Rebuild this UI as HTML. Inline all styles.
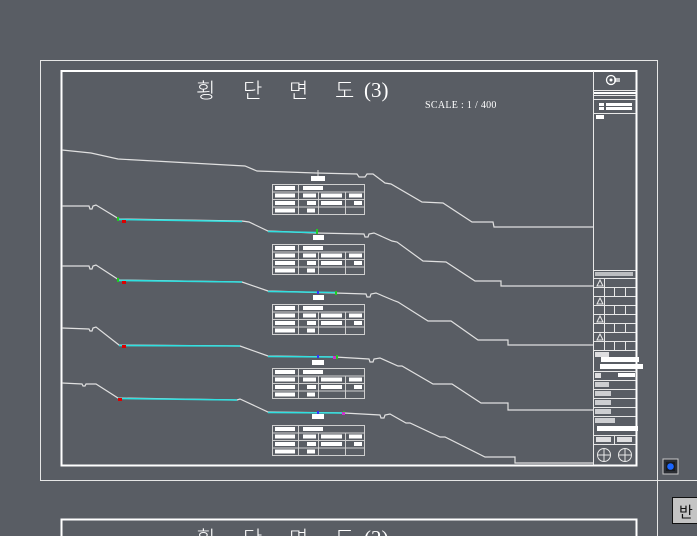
<!DOCTYPE html>
<html><head><meta charset="utf-8"><style>
html,body{margin:0;padding:0;width:697px;height:536px;overflow:hidden;background:#595d64}
svg{display:block}
</style></head><body>
<svg width="697" height="536" viewBox="0 0 697 536" xmlns="http://www.w3.org/2000/svg">
<defs>
<g id="tbl">
  <g fill="none" stroke="#cfcfcf" stroke-width="1">
    <rect x="272.5" y="0.5" width="92" height="30"/>
    <line x1="272" y1="8" x2="365" y2="8"/>
    <line x1="272" y1="15.5" x2="365" y2="15.5"/>
    <line x1="272" y1="23" x2="365" y2="23"/>
    <line x1="298.5" y1="0" x2="298.5" y2="31"/>
    <line x1="318.5" y1="8" x2="318.5" y2="31"/>
    <line x1="345.5" y1="8" x2="345.5" y2="31"/>
  </g>
  <g fill="#fff">
    <rect x="275" y="2" width="20" height="4"/>
    <rect x="303" y="2" width="20" height="4"/>
    <rect x="275" y="9.5" width="20" height="4"/><rect x="303" y="9.5" width="13" height="4"/><rect x="321" y="9.5" width="21" height="4"/><rect x="349" y="9.5" width="13" height="4"/>
    <rect x="275" y="17" width="20" height="4"/><rect x="307" y="17" width="9" height="4"/><rect x="321" y="17" width="21" height="4"/><rect x="354" y="17" width="8" height="4"/>
    <rect x="275" y="24.5" width="20" height="4"/><rect x="307" y="24.5" width="8" height="4"/>
  </g>
</g>
</defs>

<g stroke="#e6e6e6" stroke-width="1" fill="none">
  <line x1="40.5" y1="60.5" x2="657.5" y2="60.5"/>
  <line x1="40.5" y1="60" x2="40.5" y2="480.5"/>
  <line x1="40" y1="480.5" x2="697" y2="480.5"/>
  <line x1="657.5" y1="60" x2="657.5" y2="536"/>
</g>
<rect x="61.5" y="71" width="575" height="394.5" fill="none" stroke="#fff" stroke-width="2"/>
<rect x="61.5" y="519.5" width="575" height="30" fill="none" stroke="#fff" stroke-width="2"/>

<g fill="#fff" font-family="'Noto Sans CJK KR','Liberation Sans',sans-serif" font-size="21" font-weight="300">
  <text x="196" y="98">횡</text><text x="243" y="98">단</text><text x="289" y="98">면</text><text x="335" y="98">도</text>
  <text x="196" y="546">횡</text><text x="243" y="546">단</text><text x="289" y="546">면</text><text x="335" y="546">도</text>
</g>
<g fill="#fff" font-family="'Liberation Serif',serif" font-size="21">
  <text x="364" y="97">(3)</text><text x="364" y="545">(2)</text>
</g>
<text x="425" y="108" fill="#fff" font-family="'Liberation Serif',serif" font-size="10" letter-spacing="0.3">SCALE : 1 / 400</text>

<g fill="none" stroke="#e0e0e0" stroke-width="1.2">
  <polyline points="62,150 91,153 118,159 245,166 257,171 316,173 357,174 359,177 365,177 367,174 373,174 385,183 391,184 422,202 443,203 472,222 493,222 494,227 593,227"/>
  <polyline points="62,206 89,206 90,209 92,209 93,206 96,205 119,219 242,221 249,222 268,231 316,233 364,234 365,237 368,237 369,234 374,233 392,241 397,242 423,261 446,262 475,281 501,281 501,286 593,286"/>
  <polyline points="62,266 89,266 90,269 92,269 93,266 96,265 119,280 242,282 268,291 335,293 366,294 367,297 370,297 371,294 376,293 395,301 398,302 428,321 451,321 478,340 508,340 508,345 593,345"/>
  <polyline points="62,328 89,329 90,331 92,331 93,328 96,327 119,345 240,346 268,356 335,357 369,359 370,362 373,362 374,359 380,358 398,366 402,366 433,384 452,384 481,403 508,403 508,410 593,410"/>
  <polyline points="62,383 82,384 83,386 85,386 86,384 96,384 118,398 237,400 240,399 268,412 344,413 380,415 381,418 384,418 385,415 390,414 406,423 410,423 440,437 445,437 485,457 515,457 515,463 593,463"/>
</g>
<g fill="none" stroke="#2fe0e0" stroke-width="1.6">
  <line x1="119" y1="219.5" x2="242" y2="221.5"/><line x1="268" y1="231.5" x2="316" y2="232.5"/>
  <line x1="119" y1="280.5" x2="242" y2="282"/><line x1="268" y1="291.5" x2="335" y2="292.5"/>
  <line x1="119" y1="345.5" x2="240" y2="346"/><line x1="268" y1="356.5" x2="335" y2="357"/>
  <line x1="118" y1="398.5" x2="237" y2="400"/><line x1="268" y1="412.5" x2="344" y2="413"/>
</g>
<g>
  <rect x="122" y="220" width="4" height="3" fill="#d00"/><rect x="122" y="281" width="4" height="3" fill="#d00"/>
  <rect x="122" y="345" width="4" height="3" fill="#d00"/><rect x="118" y="398" width="4" height="3" fill="#d00"/>
  <rect x="117" y="217" width="2" height="4" fill="#2c2"/><rect x="117" y="278" width="2" height="4" fill="#2c2"/>
  <rect x="316" y="229" width="2" height="5" fill="#2c2"/><rect x="335" y="291" width="2" height="4" fill="#2c2"/>
  <rect x="336" y="355" width="2" height="4" fill="#2c2"/><rect x="343" y="411" width="2" height="4" fill="#2c2"/>
  <rect x="333" y="356" width="3" height="3" fill="#c3c"/><rect x="342" y="412" width="3" height="3" fill="#c3c"/>
  <rect x="317" y="291" width="2" height="3" fill="#33f"/><rect x="317" y="355" width="2" height="3" fill="#33f"/><rect x="317" y="411" width="2" height="3" fill="#33f"/>
  <line x1="318" y1="170" x2="318" y2="176" stroke="#ddd"/>
</g>
<g fill="#fff">
  <rect x="311" y="176" width="14" height="5"/><rect x="313" y="235" width="11" height="5"/>
  <rect x="313" y="295" width="11" height="5"/><rect x="312" y="360" width="12" height="5"/><rect x="312" y="414" width="12" height="5"/>
</g>
<use href="#tbl" y="184"/><use href="#tbl" y="244"/><use href="#tbl" y="304"/><use href="#tbl" y="368"/><use href="#tbl" y="425"/>

<g fill="none" stroke="#e8e8e8" stroke-width="1">
  <line x1="593.5" y1="71" x2="593.5" y2="465"/>
  <line x1="594" y1="90.5" x2="636" y2="90.5"/>
  <line x1="594" y1="95.5" x2="636" y2="95.5"/>
  <line x1="594" y1="99.5" x2="636" y2="99.5"/>
  <line x1="594" y1="113.5" x2="636" y2="113.5"/>
  <line x1="594" y1="270.5" x2="636" y2="270.5"/>
  <line x1="594" y1="278.5" x2="636" y2="278.5"/>
  <line x1="604.5" y1="278" x2="604.5" y2="350"/>
  <line x1="594" y1="287.5" x2="636" y2="287.5"/><line x1="594" y1="296.5" x2="636" y2="296.5"/>
  <line x1="594" y1="305.5" x2="636" y2="305.5"/><line x1="594" y1="314.5" x2="636" y2="314.5"/>
  <line x1="594" y1="323.5" x2="636" y2="323.5"/><line x1="594" y1="332.5" x2="636" y2="332.5"/>
  <line x1="594" y1="341.5" x2="636" y2="341.5"/><line x1="594" y1="350.5" x2="636" y2="350.5"/>
  <path d="M614.5 287v9M625.5 287v9M614.5 305v9M625.5 305v9M614.5 323v9M625.5 323v9M614.5 341v9M625.5 341v9"/>
  <path d="M594 371.5h42M594 380.5h42M594 389.5h42M594 398.5h42M594 407.5h42M594 416.5h42M594 435.5h42M594 444.5h42M614.5 435v9"/>
  <path d="M597 286l3-6 3 6zM597 304l3-6 3 6zM597 322l3-6 3 6zM597 340l3-6 3 6z"/>
  <circle cx="604" cy="455" r="6.5"/><circle cx="625" cy="455" r="6.5"/>
  <path d="M597.5 455h13M604 448.5v13M618.5 455h13M625 448.5v13"/>
</g>
<g fill="#fff">
  <rect x="594" y="92" width="42" height="2"/>
  <rect x="599" y="103" width="5" height="3"/><rect x="606" y="103" width="26" height="3"/>
  <rect x="599" y="107" width="5" height="3"/><rect x="606" y="107" width="26" height="3"/>
  <rect x="596" y="115" width="8" height="4"/>
  <rect x="595" y="272" width="38" height="4" opacity="0.6"/>
  <rect x="595" y="352" width="14" height="5" opacity="0.8"/>
  <rect x="601" y="357" width="38" height="5"/><rect x="600" y="364" width="43" height="5"/>
  <rect x="618" y="373" width="17" height="4"/>
  <rect x="595" y="373" width="6" height="5" opacity="0.8"/><rect x="595" y="382" width="14" height="5" opacity="0.7"/>
  <rect x="595" y="391" width="16" height="5" opacity="0.7"/><rect x="595" y="400" width="16" height="5" opacity="0.7"/>
  <rect x="595" y="409" width="16" height="5" opacity="0.7"/><rect x="595" y="418" width="20" height="5" opacity="0.7"/>
  <rect x="597" y="426" width="41" height="5"/>
  <rect x="596" y="437" width="15" height="5" opacity="0.8"/><rect x="617" y="437" width="15" height="5" opacity="0.8"/>
</g>
<g fill="none" stroke="#fff" stroke-width="1.3">
  <circle cx="611" cy="80" r="4.5"/><path d="M614 79h6M614 81h6"/>
</g>
<circle cx="611" cy="80" r="1.5" fill="#fff"/>

<rect x="663" y="459" width="15" height="15" fill="#2a2d33" stroke="#c8c8c8" stroke-width="1"/>
<rect x="666" y="462" width="9" height="9" fill="#1a1c20"/>
<circle cx="670.5" cy="466.5" r="3.3" fill="#1a66ff"/>

<rect x="672.5" y="497.5" width="30" height="26" fill="#c4c4c4" stroke="#111"/>
<text x="679" y="517" fill="#111" font-family="'Liberation Sans','Noto Sans CJK KR',sans-serif" font-size="15">반</text>
</svg>
</body></html>
